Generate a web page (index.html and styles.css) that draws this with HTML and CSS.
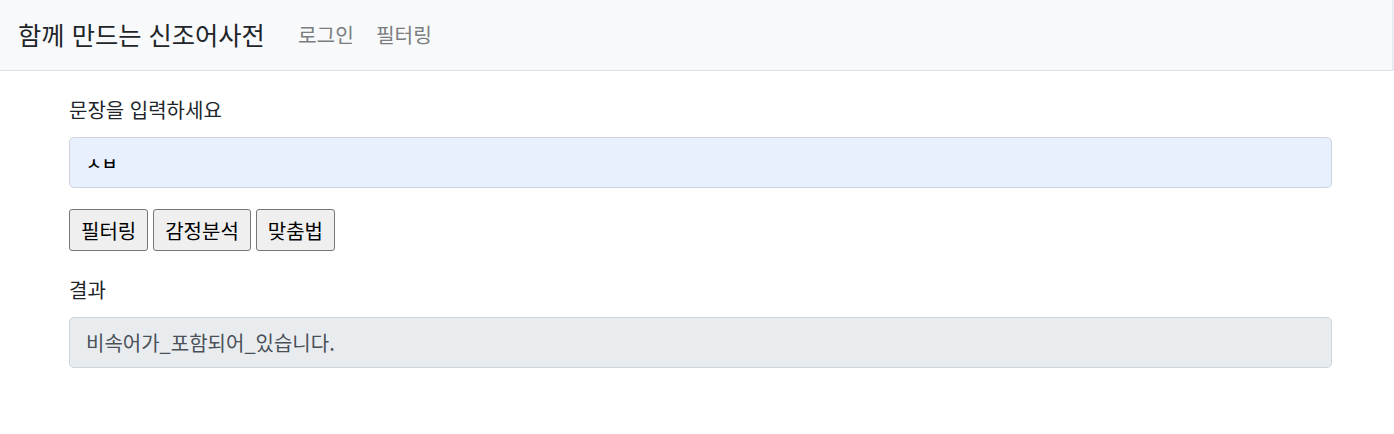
FILE: index.html
```html
<!DOCTYPE html>
<html lang="ko">
<head>
<meta charset="utf-8">
<title>함께 만드는 신조어사전</title>
<link rel="stylesheet" href="styles.css">
</head>
<body>
<nav class="navbar">
  <span class="brand">함께 만드는 신조어사전</span>
  <a class="nav-link" href="#">로그인</a>
  <a class="nav-link" href="#">필터링</a>
</nav>
<main class="container">
  <label class="label" for="sentence">문장을 입력하세요</label>
  <input class="form-control input" id="sentence" type="text" value="ㅅㅂ">
  <div class="buttons">
    <button class="btn">필터링</button>
    <button class="btn">감정분석</button>
    <button class="btn">맞춤법</button>
  </div>
  <div class="label">결과</div>
  <div class="form-control result">비속어가_포함되어_있습니다.</div>
</main>
</body>
</html>
```
FILE: styles.css
```css
* { box-sizing: border-box; }
body {
  margin: 0;
  font-family: "Noto Sans CJK KR", "Noto Sans", sans-serif;
  font-size: 20px;
  color: #212529;
  background: #fff;
}
.navbar {
  display: flex;
  align-items: center;
  height: 71px;
  padding: 0 18px 2px;
  background: #f8f9fa;
  border-bottom: 1px solid #dee2e6;
  border-right: 2px solid #e9ecef;
}
.brand {
  font-size: 25.3px;
  color: #212529;
  margin-right: 33px;
}
.nav-link {
  font-size: 20.3px;
  color: #7a7d80;
  text-decoration: none;
  margin-right: 22px;
}
.container {
  padding: 24px 62px 0 69px;
  display: flex;
  flex-direction: column;
}
.label {
  font-size: 20px;
  line-height: 30px;
  margin-bottom: 12px;
}
.form-control {
  width: 100%;
  height: 51px;
  border: 1px solid #ced4da;
  border-radius: 5px;
  padding: 0 16px;
  font-family: "Noto Sans CJK KR", sans-serif;
  font-size: 20px;
  display: flex;
  align-items: center;
}
.input {
  background: #e8f0fe;
  color: #000;
  font-size: 17px;
  font-weight: 500;
  outline: none;
}
.buttons {
  display: flex;
  gap: 5px;
  margin: 21px 0 24px;
}
.btn {
  font-family: "Noto Sans CJK KR", sans-serif;
  font-size: 20px;
  height: 42px;
  padding: 0 11px;
  background: #efefef;
  border: 1px solid #767676;
  border-radius: 3px;
  color: #000;
}
.result {
  background: #e9ecef;
  color: #495057;
}
```
